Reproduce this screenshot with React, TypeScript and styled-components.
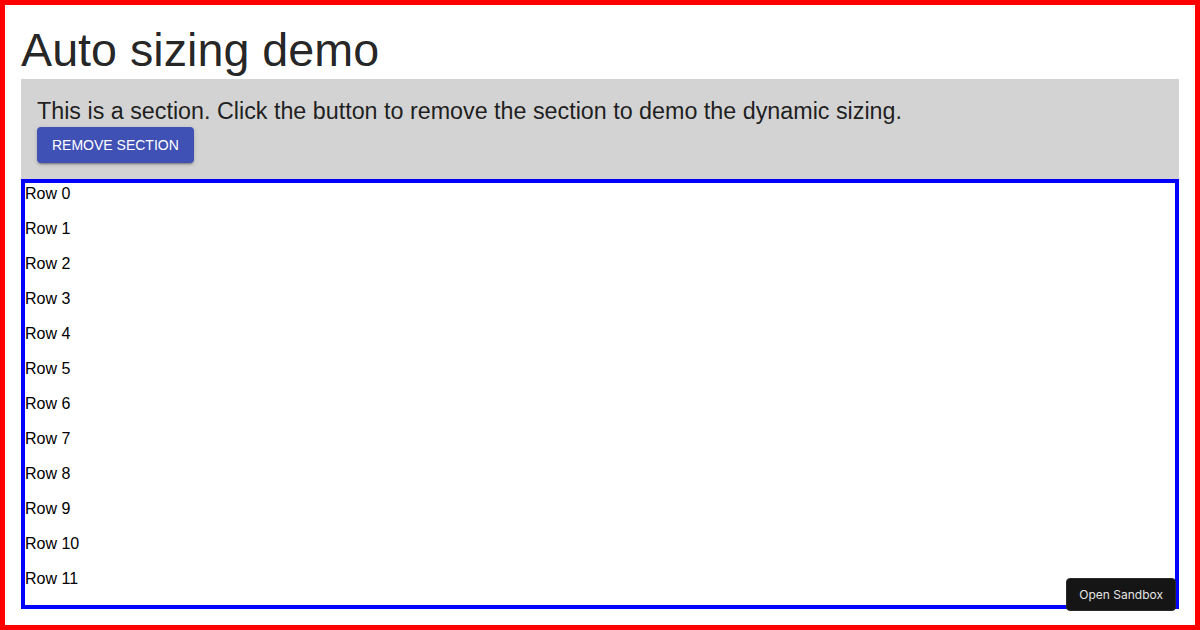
import styled, { createGlobalStyle } from 'styled-components';

const GlobalStyle = createGlobalStyle`
    html, body {
        margin: 0;
        padding: 0;
    }
    body {
        font-family: 'Liberation Sans', Helvetica, Arial, sans-serif;
    }
    * {
        box-sizing: border-box;
    }
`;

const Frame = styled.div`
    display: flex;
    flex-direction: column;
    height: 630px;
    border: 5px solid red;
    padding: 16px;
`;

const Title = styled.h1`
    margin: 0;
    font-size: 46.7px;
    font-weight: 400;
    line-height: 58px;
    color: rgba(0, 0, 0, 0.87);
`;

const Section = styled.section`
    background: lightgray;
    padding: 16px;
`;

const SectionText = styled.p`
    margin: 0;
    font-size: 23.3px;
    line-height: 32px;
    color: rgba(0, 0, 0, 0.87);
`;

const Button = styled.button`
    display: inline-flex;
    align-items: center;
    height: 36px;
    padding: 6px 15px;
    border: none;
    border-radius: 4px;
    background: #3f51b5;
    color: #fff;
    font-family: 'Liberation Sans', Helvetica, Arial, sans-serif;
    font-size: 14px;
    font-weight: 400;
    text-transform: uppercase;
    box-shadow: 0px 3px 1px -2px rgba(0, 0, 0, 0.2), 0px 2px 2px 0px rgba(0, 0, 0, 0.14),
        0px 1px 5px 0px rgba(0, 0, 0, 0.12);
    cursor: pointer;
`;

const List = styled.div`
    flex: 1;
    border: 4px solid blue;
    overflow: hidden;
`;

const Row = styled.div`
    height: 35px;
    line-height: 22px;
    font-size: 16px;
    color: #000;
`;

const SandboxButton = styled.a`
    position: fixed;
    right: 24px;
    bottom: 19px;
    display: flex;
    align-items: center;
    height: 33px;
    padding: 0 12px;
    background: #151515;
    border: 1px solid #2a2a2a;
    border-radius: 4px;
    color: #e5e5e5;
    font-family: Inter, sans-serif;
    font-size: 12px;
    text-decoration: none;
`;

const rows = Array.from({ length: 12 }, (_, i) => i);

const App = () => {
    return (
        <>
            <GlobalStyle />
            <Frame>
                <Title>Auto sizing demo</Title>
                <Section>
                    <SectionText>
                        This is a section. Click the button to remove the section to demo the dynamic sizing.
                    </SectionText>
                    <Button>Remove section</Button>
                </Section>
                <List>
                    {rows.map((i) => (
                        <Row key={i}>Row {i}</Row>
                    ))}
                </List>
            </Frame>
            <SandboxButton href='#'>Open Sandbox</SandboxButton>
        </>
    );
};

export default App;
